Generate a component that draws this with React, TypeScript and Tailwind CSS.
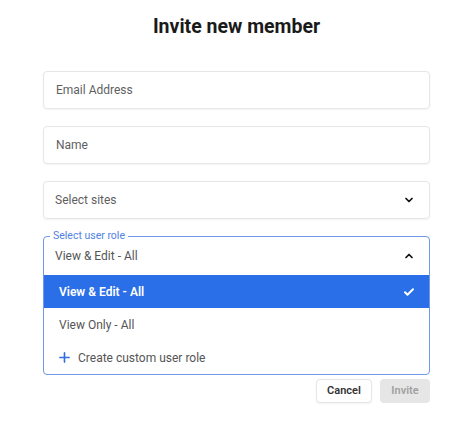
import React from "react";

function ChevronDown() {
  return (
    <svg width="12" height="12" viewBox="0 0 24 24" fill="none" stroke="#111" strokeWidth="3.5" strokeLinecap="round" strokeLinejoin="round">
      <path d="M6 9l6 6 6-6" />
    </svg>
  );
}
function ChevronUp() {
  return (
    <svg width="12" height="12" viewBox="0 0 24 24" fill="none" stroke="#111" strokeWidth="3.5" strokeLinecap="round" strokeLinejoin="round">
      <path d="M6 15l6-6 6 6" />
    </svg>
  );
}
function Check() {
  return (
    <svg width="12" height="12" viewBox="0 0 24 24" fill="none" stroke="#fff" strokeWidth="4" strokeLinecap="round" strokeLinejoin="round">
      <path d="M4 12.5l5 5L20 6.5" />
    </svg>
  );
}
function Plus() {
  return (
    <svg width="11" height="11" viewBox="0 0 12 12" fill="none" stroke="#2f6fe0" strokeWidth="1.8" strokeLinecap="round">
      <path d="M6 1v10M1 6h10" />
    </svg>
  );
}

export default function App() {
  return (
    <div
      className="w-[474px] h-[421px] bg-white"
      style={{ fontFamily: "Roboto, 'Noto Sans', sans-serif" }}
    >
      <div className="w-[387px] ml-[43px] flex flex-col">
        <h1 className="text-[19.5px] leading-[24px] font-bold text-[#1a1a1a] text-center mt-[15px]">
          Invite new member
        </h1>
        <div className="mt-[32px] flex flex-col gap-[17px]">
          <div className="h-[38px] border border-[#e6e6e6] rounded-[4px] shadow-[0_1px_2px_rgba(0,0,0,0.05)] flex items-center pl-[12px] text-[12px] text-[#5f5f5f]">
            Email Address
          </div>
          <div className="h-[38px] border border-[#e6e6e6] rounded-[4px] shadow-[0_1px_2px_rgba(0,0,0,0.05)] flex items-center pl-[12px] text-[12px] text-[#5f5f5f]">
            Name
          </div>
          <div className="h-[38px] border border-[#e6e6e6] rounded-[4px] shadow-[0_1px_2px_rgba(0,0,0,0.05)] flex items-center justify-between pl-[11px] pr-[14px] text-[12px] text-[#5f5f5f]">
            <span>Select sites</span>
            <ChevronDown />
          </div>
          <div className="relative border border-[#6f98e6] rounded-[4px] flex flex-col">
            <span className="absolute -top-[8px] left-[6px] bg-white px-[3px] text-[10.5px] leading-[14px] text-[#4f82e3]">
              Select user role
            </span>
            <div className="h-[38px] flex items-center justify-between pl-[11px] pr-[14px] text-[12px] text-[#555]">
              <span>View &amp; Edit - All</span>
              <ChevronUp />
            </div>
            <div className="h-[33px] bg-[#2a6fe8] flex items-center justify-between pl-[15px] pr-[14px] text-[12px] font-semibold text-white">
              <span>View &amp; Edit - All</span>
              <Check />
            </div>
            <div className="h-[33px] flex items-center pl-[15px] text-[12px] text-[#555]">
              View Only - All
            </div>
            <div className="h-[33px] flex items-center gap-[8px] pl-[15px] text-[12px] text-[#555]">
              <Plus />
              <span>Create custom user role</span>
            </div>
          </div>
        </div>
        <div className="mt-[4px] flex justify-end gap-[8px]">
          <button className="w-[56px] h-[24px] border border-[#e6e6e6] rounded-[4px] bg-white text-[11px] font-semibold text-[#333] shadow-[0_1px_2px_rgba(0,0,0,0.05)]">
            Cancel
          </button>
          <button className="w-[50px] h-[24px] rounded-[4px] bg-[#e6e6e6] text-[11px] font-semibold text-[#a0a0a0]">
            Invite
          </button>
        </div>
      </div>
    </div>
  );
}
